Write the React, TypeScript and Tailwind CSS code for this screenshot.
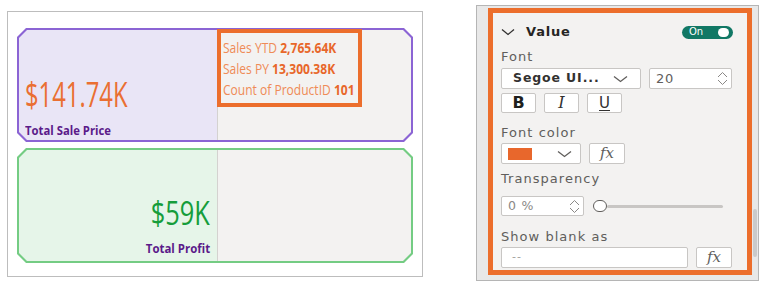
import * as React from "react";

const OUTER_CLIP =
  "[clip-path:polygon(9px_0,calc(100%_-_9px)_0,100%_9px,100%_calc(100%_-_9px),calc(100%_-_9px)_100%,9px_100%,0_calc(100%_-_9px),0_9px)]";
const INNER_CLIP =
  "[clip-path:polygon(8px_0,calc(100%_-_8px)_0,100%_8px,100%_calc(100%_-_8px),calc(100%_-_8px)_100%,8px_100%,0_calc(100%_-_8px),0_8px)]";

interface KpiCardProps {
  border: string;
  fill: string;
  height: string;
  children: React.ReactNode;
  overlay?: React.ReactNode;
}

const KpiCard: React.FC<KpiCardProps> = ({ border, fill, height, children, overlay }) => (
  <div className={`relative ${height}`}>
    <div className={`h-full p-[2px] ${border} ${OUTER_CLIP}`}>
      <div className={`flex h-full ${INNER_CLIP}`}>
        <div className={`w-[198px] ${fill}`}>{children}</div>
        <div className="w-px bg-[#d4d2d0]" />
        <div className="flex-1 bg-[#f3f2f1]" />
      </div>
    </div>
    {overlay}
  </div>
);

const Chevron = ({ w = 14, h = 8, color = "#605e5c" }: { w?: number; h?: number; color?: string }) => (
  <svg width={w} height={h} viewBox={`0 0 ${w} ${h}`} fill="none">
    <polyline points={`1,1.5 ${w / 2},${h - 1.5} ${w - 1},1.5`} stroke={color} strokeWidth="1.3" />
  </svg>
);

const Spinner = () => (
  <svg width="11" height="15" viewBox="0 0 11 15" fill="none">
    <polyline points="1,6 5.5,1.5 10,6" stroke="#8a8886" strokeWidth="1" />
    <polyline points="1,9 5.5,13.5 10,9" stroke="#8a8886" strokeWidth="1" />
  </svg>
);

const FxButton = () => (
  <div className="flex h-[21px] w-[36px] items-center justify-center rounded-[2px] border border-[#c8c6c4] bg-white font-['DejaVu_Serif',serif] text-[15px] italic leading-none text-[#605e5c]">
    fx
  </div>
);

const Label = ({ children, className = "" }: { children: React.ReactNode; className?: string }) => (
  <div className={`h-[18px] text-[13px] leading-[18px] tracking-[0.08em] text-[#605e5c] ${className}`}>{children}</div>
);

const ORANGE_ROWS = [
  { label: "Sales YTD", value: "2,765.64K" },
  { label: "Sales PY", value: "13,300.38K" },
  { label: "Count of ProductID", value: "101" },
];

export default function App() {
  return (
    <div className="flex h-[291px] w-[768px] bg-white">
      {/* report canvas */}
      <div className="ml-[7px] mt-[11px] flex h-[266px] w-[416px] flex-col gap-[6px] border border-[#bdbdbd] px-[9px] pt-[16px] font-['Open_Sans',sans-serif]">
        <KpiCard
          border="bg-[#8b64d4]"
          fill="bg-[#e9e5f6]"
          height="h-[114px]"
          overlay={
            <div className="absolute left-[200px] top-[1px] h-[78px] w-[145px] border-4 border-[#ec6e2c] px-[2px] pt-[4px]">
              {ORANGE_ROWS.map((r) => (
                <div key={r.label} className="origin-left scale-x-[0.86] whitespace-nowrap text-[14px] leading-[21px]">
                  <span className="text-[#ef8b57]">{r.label}</span>{" "}
                  <span className="font-bold text-[#e8672a]">{r.value}</span>
                </div>
              ))}
            </div>
          }
        >
          <div className="flex h-full flex-col items-start justify-end pb-[2px] pl-[6px]">
            <span className="origin-left scale-x-[0.7] text-[34px] font-medium leading-[34px] text-[#ea6f32]">$141.74K</span>
            <span className="mt-[11px] origin-left scale-x-[0.87] text-[13px] font-bold leading-[16px] text-[#5b1a8a]">
              Total Sale Price
            </span>
          </div>
        </KpiCard>
        <KpiCard border="bg-[#74cc83]" fill="bg-[#e6f5e9]" height="h-[115px]">
          <div className="flex h-full flex-col items-end justify-end pb-[5px] pr-[7px]">
            <span className="origin-right scale-x-[0.77] text-[33px] font-medium leading-[33px] text-[#169d3b]">$59K</span>
            <span className="mt-[11px] origin-right scale-x-[0.88] text-[13px] font-bold leading-[16px] text-[#5b1a8a]">
              Total Profit
            </span>
          </div>
        </KpiCard>
      </div>

      {/* format pane */}
      <div className="ml-[53px] mt-[5px] flex h-[276px] w-[283px] border border-[#b5b5b5] bg-[#e8e8e8] pl-[11px] pt-[2px] font-['DejaVu_Sans',sans-serif]">
        <div className="flex h-[267px] w-[264px] flex-col border-[5px] border-[#ec6e2c] bg-[#f3f2f1] pl-[8px] pr-[14px] pt-[9px]">
          <div className="flex h-[20px] items-center justify-between">
            <div className="flex items-center gap-[11px]">
              <Chevron w={14} h={8} color="#323130" />
              <span className="text-[13px] font-bold tracking-[0.06em] text-[#252423]">Value</span>
            </div>
            <div className="flex h-[13px] w-[51px] items-center justify-between rounded-full bg-[#117865] pl-[7px] pr-[4px]">
              <span className="text-[10px] leading-none text-white">On</span>
              <span className="h-[9px] w-[11px] rounded-full bg-white" />
            </div>
          </div>

          <Label className="mt-[6px]">Font</Label>
          <div className="mt-[2px] flex h-[21px] gap-[8px]">
            <div className="flex w-[140px] items-center justify-between rounded-[2px] border border-[#c8c6c4] bg-white pl-[11px] pr-[12px]">
              <span className="text-[12.5px] font-bold tracking-[0.07em] text-[#323130]">Segoe UI...</span>
              <Chevron w={15} h={8} color="#605e5c" />
            </div>
            <div className="flex w-[83px] items-center justify-between rounded-[2px] border border-[#c8c6c4] bg-white pl-[6px] pr-[3px]">
              <span className="text-[13px] tracking-[0.06em] text-[#605e5c]">20</span>
              <Spinner />
            </div>
          </div>

          <div className="mt-[4px] flex h-[20px] gap-[8px]">
            <div className="flex w-[35px] items-center justify-center rounded-[2px] border border-[#c8c6c4] bg-white text-[16px] font-bold leading-none text-[#201f1e]">
              B
            </div>
            <div className="flex w-[35px] items-center justify-center rounded-[2px] border border-[#c8c6c4] bg-white font-['DejaVu_Serif',serif] text-[16px] italic leading-none text-[#323130]">
              I
            </div>
            <div className="flex w-[35px] items-center justify-center rounded-[2px] border border-[#c8c6c4] bg-white text-[15px] leading-none text-[#323130] underline underline-offset-2">
              U
            </div>
          </div>

          <Label className="mt-[11px]">Font color</Label>
          <div className="mt-px flex h-[21px] gap-[8px]">
            <div className="flex w-[80px] items-center justify-between rounded-[2px] border border-[#c8c6c4] bg-white pl-[6px] pr-[8px]">
              <span className="h-[12px] w-[24px] bg-[#e8672c]" />
              <Chevron w={15} h={8} color="#605e5c" />
            </div>
            <FxButton />
          </div>

          <Label className="mt-[6px]">Transparency</Label>
          <div className="mt-[8px] flex h-[20px] items-center">
            <div className="flex h-full w-[83px] items-center justify-between rounded-[2px] border border-[#c8c6c4] bg-white pl-[6px] pr-[3px]">
              <span className="text-[12.5px] tracking-[0.06em] text-[#8a8886]">0 %</span>
              <Spinner />
            </div>
            <div className="ml-[9px] flex flex-1 items-center pr-[10px]">
              <span className="h-[12px] w-[14px] shrink-0 rounded-full border-[1.5px] border-[#605e5c] bg-white" />
              <span className="h-[3px] flex-1 rounded-full bg-[#c8c6c4]" />
            </div>
          </div>

          <Label className="mt-[12px]">Show blank as</Label>
          <div className="mt-px flex h-[21px] gap-[8px]">
            <div className="flex w-[187px] items-center rounded-[2px] border border-[#c8c6c4] bg-white pl-[10px]">
              <span className="text-[11px] tracking-[0.1em] text-[#a19f9d]">--</span>
            </div>
            <FxButton />
          </div>
        </div>
        <div className="flex-1 pl-px pt-[201px]">
          <div className="h-[48px] w-[4px] rounded-full bg-[#cacaca]" />
        </div>
      </div>
    </div>
  );
}
